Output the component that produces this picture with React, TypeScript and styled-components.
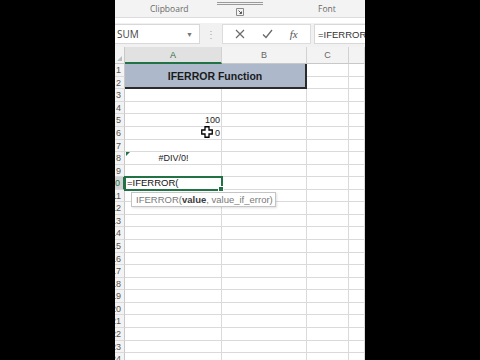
import React from "react";
import styled, { createGlobalStyle } from "styled-components";

const Global = createGlobalStyle`
  html, body { margin: 0; padding: 0; background: #000; }
  body { width: 480px; height: 360px; overflow: hidden; font-family: "Liberation Sans", Arial, sans-serif; }
`;

const Frame = styled.div`
  display: flex;
  width: 480px;
  height: 360px;
  background: #000;
`;

const Side = styled.div`
  width: 115px;
  flex: none;
  background: #000;
`;

const Screen = styled.div`
  position: relative;
  width: 250px;
  flex: none;
  display: flex;
  flex-direction: column;
  background: #fff;
  overflow: hidden;
`;

const Ribbon = styled.div`
  height: 17px;
  flex: none;
  display: flex;
  background: #f3f3f3;
  border-bottom: 1px solid #dcdcdc;
`;

const RibbonGroup = styled.div<{ $w?: number; $pl: number }>`
  ${(p) => (p.$w ? `width: ${p.$w}px; flex: none;` : "flex: 1;")}
  display: flex;
  align-items: flex-end;
  padding-left: ${(p) => p.$pl}px;
  padding-bottom: 3px;
  box-sizing: border-box;
  font-family: "Open Sans", sans-serif;
  font-size: 8.5px;
  color: #6a6a6a;
`;

const RibbonMid = styled.div`
  width: 50px;
  flex: none;
  display: flex;
  flex-direction: column;
  align-items: center;
  padding-top: 2px;
  gap: 1px;
`;

const RibbonLine = styled.div`
  width: 46px;
  height: 1px;
  background: #9a9a9a;
`;

const Spacer = styled.div<{ $h: number; $bg?: string }>`
  height: ${(p) => p.$h}px;
  flex: none;
  background: ${(p) => p.$bg || "#fff"};
`;

const FormulaBar = styled.div`
  height: 22px;
  flex: none;
  display: flex;
  align-items: stretch;
  background: #f1f1f1;
  padding: 1px 0;
  box-sizing: border-box;
`;

const NameBox = styled.div`
  width: 85px;
  flex: none;
  display: flex;
  align-items: center;
  justify-content: space-between;
  padding: 0 6px 0 2px;
  box-sizing: border-box;
  background: #fff;
  border: 1px solid #d8d8d8;
  border-left: none;
  font-family: "Open Sans", sans-serif;
  font-size: 10px;
  color: #444;
`;

const Caret = styled.span`
  font-size: 7px;
  color: #777;
`;

const Dots = styled.div`
  width: 22px;
  flex: none;
  display: flex;
  align-items: center;
  justify-content: center;
  color: #a8a8a8;
  font-size: 10px;
`;

const IconBox = styled.div`
  width: 89px;
  flex: none;
  display: flex;
  align-items: center;
  justify-content: space-around;
  padding: 0 4px;
  box-sizing: border-box;
  background: #fff;
  border: 1px solid #dcdcdc;
`;

const Fx = styled.span`
  font-family: "Liberation Serif", serif;
  font-style: italic;
  font-size: 11px;
  color: #555;
`;

const FormulaInput = styled.div`
  flex: 1;
  margin-left: 3px;
  display: flex;
  align-items: center;
  padding-left: 3px;
  background: #fff;
  border: 1px solid #d8d8d8;
  border-right: none;
  font-size: 9.5px;
  color: #333;
  white-space: nowrap;
  overflow: hidden;
`;

const Sheet = styled.div<{ $rows: string }>`
  flex: 1;
  display: grid;
  grid-template-columns: 10px 97px 85px 42px 16px;
  grid-template-rows: ${(p) => p.$rows};
  overflow: hidden;
  align-content: start;
`;

const ColHead = styled.div<{ $active?: boolean }>`
  display: flex;
  align-items: center;
  justify-content: center;
  box-sizing: border-box;
  background: ${(p) => (p.$active ? "#e1e1e1" : "#f3f3f3")};
  border-right: 1px solid #d2d2d2;
  border-bottom: ${(p) => (p.$active ? "2px solid #217346" : "1px solid #c8c8c8")};
  font-size: 9px;
  color: ${(p) => (p.$active ? "#2f6b45" : "#666")};
`;

const Corner = styled.div`
  position: relative;
  background: #f3f3f3;
  border-right: 1px solid #c8c8c8;
  border-bottom: 1px solid #c8c8c8;
  box-sizing: border-box;
  &::after {
    content: "";
    position: absolute;
    right: 2px;
    bottom: 2px;
    width: 0;
    height: 0;
    border-left: 5px solid transparent;
    border-bottom: 5px solid #bdbdbd;
  }
`;

const RowHead = styled.div<{ $active?: boolean }>`
  display: flex;
  align-items: center;
  justify-content: flex-end;
  overflow: hidden;
  padding-right: 3px;
  box-sizing: border-box;
  background: ${(p) => (p.$active ? "#d2d2d2" : "#f3f3f3")};
  border-right: ${(p) => (p.$active ? "2px solid #217346" : "1px solid #c8c8c8")};
  border-bottom: 1px solid #dadada;
  font-size: 9px;
  color: ${(p) => (p.$active ? "#217346" : "#555")};
  white-space: nowrap;
`;

const Cell = styled.div<{ $align?: string }>`
  position: relative;
  display: flex;
  align-items: flex-end;
  justify-content: ${(p) => p.$align || "flex-start"};
  padding: 0 1px 1px 2px;
  box-sizing: border-box;
  border-right: 1px solid #dadada;
  border-bottom: 1px solid #dadada;
  font-size: 9px;
  color: #222;
  white-space: nowrap;
`;

const ActiveCell = styled(Cell)`
  z-index: 2;
  outline: 2px solid #217346;
  outline-offset: -1px;
  font-size: 9.5px;
  color: #111;
  &::after {
    content: "";
    position: absolute;
    right: -3px;
    bottom: -3px;
    width: 4px;
    height: 4px;
    background: #217346;
    border: 1px solid #fff;
  }
`;

const ErrorMark = styled.span`
  position: absolute;
  left: 1px;
  top: 0;
  width: 0;
  height: 0;
  border-top: 4px solid #217346;
  border-right: 4px solid transparent;
`;

const Title = styled.div`
  grid-column: 2 / 4;
  grid-row: 2 / 4;
  display: flex;
  align-items: center;
  justify-content: center;
  background: #adb9ca;
  border-right: 2px solid #2b2b2b;
  border-bottom: 2px solid #2b2b2b;
  box-sizing: border-box;
  font-size: 10.5px;
  font-weight: bold;
  color: #1b1b1b;
`;

const Tooltip = styled.div`
  position: absolute;
  left: 16px;
  top: 192px;
  width: 145px;
  height: 15px;
  box-sizing: border-box;
  display: flex;
  align-items: center;
  padding-left: 4px;
  background: #fff;
  border: 1px solid #c4c4c4;
  box-shadow: 1px 1px 2px rgba(0, 0, 0, 0.12);
  font-size: 9.5px;
  color: #7a7a7a;
  white-space: nowrap;
  z-index: 5;
`;

const Strong = styled.b`
  color: #3c3c3c;
`;

const Pointer = styled.div`
  position: absolute;
  left: 86px;
  top: 124px;
  width: 12px;
  height: 12px;
  z-index: 4;
`;

const cols = ["", "A", "B", "C", ""];
const NROWS = 24;

export default function App() {
  const tops: number[] = [];
  for (let i = 0; i <= NROWS; i++) tops.push(Math.round(64.2 + i * 12.56));
  const heights = tops.slice(1).map((t, i) => t - tops[i]);
  const rowsTpl = ["17px", ...heights.map((h) => `${h}px`)].join(" ");

  const cells: React.ReactNode[] = [<Corner key="corner" />];
  cols.forEach((c, ci) => {
    if (ci > 0)
      cells.push(
        <ColHead key={`h${ci}`} $active={ci === 1}>
          {c}
        </ColHead>
      );
  });

  for (let r = 1; r <= NROWS; r++) {
    cells.push(
      <RowHead key={`r${r}`} $active={r === 10}>
        {r}
      </RowHead>
    );
    for (let c = 1; c < cols.length; c++) {
      if ((r === 1 || r === 2) && (c === 1 || c === 2)) {
        if (r === 1 && c === 1) cells.push(<Title key="title">IFERROR Function</Title>);
        continue;
      }
      const k = `c${r}-${c}`;
      if (r === 5 && c === 1) cells.push(<Cell key={k} $align="flex-end">100</Cell>);
      else if (r === 6 && c === 1) cells.push(<Cell key={k} $align="flex-end">0</Cell>);
      else if (r === 8 && c === 1)
        cells.push(
          <Cell key={k} $align="center">
            <ErrorMark />
            #DIV/0!
          </Cell>
        );
      else if (r === 10 && c === 1) cells.push(<ActiveCell key={k}>=IFERROR(</ActiveCell>);
      else cells.push(<Cell key={k} />);
    }
  }

  return (
    <>
      <Global />
      <Frame>
        <Side />
        <Screen>
          <Ribbon>
            <RibbonGroup $w={100} $pl={35}>Clipboard</RibbonGroup>
            <RibbonMid>
              <RibbonLine />
              <RibbonLine />
              <svg width="8" height="8" viewBox="0 0 8 8" style={{ marginTop: 2 }}>
                <path d="M0.5 0.5h7v7h-7z" fill="none" stroke="#8a8a8a" />
                <path d="M2.5 2.5l3 3M5.5 3.5v2h-2" fill="none" stroke="#555" />
              </svg>
            </RibbonMid>
            <RibbonGroup $pl={53}>Font</RibbonGroup>
          </Ribbon>
          <Spacer $h={5} />
          <FormulaBar>
            <NameBox>
              <span>SUM</span>
              <Caret>▼</Caret>
            </NameBox>
            <Dots>⋮</Dots>
            <IconBox>
              <svg width="10" height="10" viewBox="0 0 10 10">
                <path d="M1 1l8 8M9 1l-8 8" stroke="#6a6a6a" strokeWidth="1.2" />
              </svg>
              <svg width="11" height="10" viewBox="0 0 11 10">
                <path d="M1 5.5l3 3 6-7.5" fill="none" stroke="#6a6a6a" strokeWidth="1.3" />
              </svg>
              <Fx>fx</Fx>
            </IconBox>
            <FormulaInput>=IFERROR(</FormulaInput>
          </FormulaBar>
          <Spacer $h={2} $bg="#f1f1f1" />
          <Sheet $rows={rowsTpl}>{cells}</Sheet>
          <Tooltip>
            IFERROR(<Strong>value</Strong>, value_if_error)
          </Tooltip>
          <Pointer>
            <svg width="12" height="12" viewBox="0 0 12 12">
              <path
                d="M4 0.75h4v3.25h3.25v4h-3.25v3.25h-4v-3.25h-3.25v-4h3.25z"
                fill="#fff"
                stroke="#000"
                strokeWidth="1.3"
              />
            </svg>
          </Pointer>
        </Screen>
        <Side />
      </Frame>
    </>
  );
}
